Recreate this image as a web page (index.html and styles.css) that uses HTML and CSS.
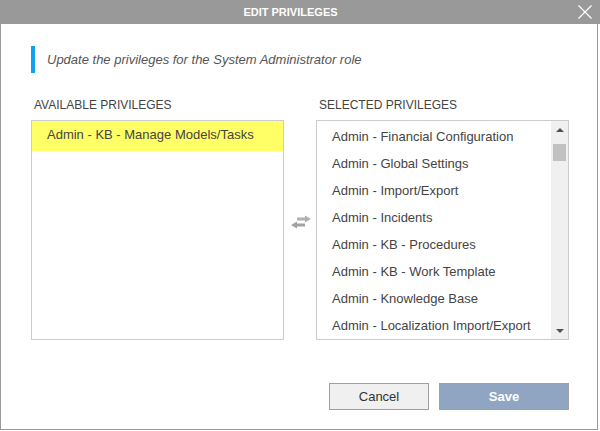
FILE: index.html
```html
<!DOCTYPE html>
<html>
<head>
<meta charset="utf-8">
<link rel="stylesheet" href="styles.css">
</head>
<body>
<div class="dialog">
  <div class="header">
    <div class="title">EDIT PRIVILEGES</div>
    <div class="close">
      <svg width="14" height="14" viewBox="0 0 14 14"><path d="M0.5 0.5 L13.5 13.5 M13.5 0.5 L0.5 13.5" stroke="#fff" stroke-width="1.2" fill="none"/></svg>
    </div>
  </div>
  <div class="body">
    <div class="intro">Update the privileges for the System Administrator role</div>
    <div class="columns">
      <div class="col">
        <div class="label">AVAILABLE PRIVILEGES</div>
        <div class="listbox">
          <div class="avail-item">Admin - KB - Manage Models/Tasks</div>
        </div>
      </div>
      <div class="swap">
        <svg width="22" height="14" viewBox="0 0 22 14">
          <path d="M7 2.5 H15 V0.5 L21 4 L15 7.5 V5.5 H7 Z" fill="#b0b0b0"/>
          <path d="M15 8.5 H7 V6.5 L1 10 L7 13.5 V11.5 H15 Z" fill="#a2a2a2"/>
        </svg>
      </div>
      <div class="col">
        <div class="label">SELECTED PRIVILEGES</div>
        <div class="listbox selected">
          <div class="items">
            <div class="item">Admin - Financial Configuration</div>
            <div class="item">Admin - Global Settings</div>
            <div class="item">Admin - Import/Export</div>
            <div class="item">Admin - Incidents</div>
            <div class="item">Admin - KB - Procedures</div>
            <div class="item">Admin - KB - Work Template</div>
            <div class="item">Admin - Knowledge Base</div>
            <div class="item">Admin - Localization Import/Export</div>
          </div>
          <div class="scrollbar">
            <div class="sb-btn"><span class="tri-up"></span></div>
            <div class="sb-track"><div class="sb-thumb"></div></div>
            <div class="sb-btn"><span class="tri-down"></span></div>
          </div>
        </div>
      </div>
    </div>
    <div class="actions">
      <button class="btn cancel">Cancel</button>
      <button class="btn save">Save</button>
    </div>
  </div>
</div>
</body>
</html>
```
FILE: styles.css
```css
html, body {
  margin: 0;
  padding: 0;
  background: #fff;
}
body {
  font-family: "Liberation Sans", Arial, sans-serif;
  color: #444;
}
.dialog {
  width: 600px;
  height: 431px;
}
.header {
  height: 24px;
  background: #999;
  display: flex;
  align-items: center;
}
.title {
  flex: 1;
  text-align: center;
  padding-left: 3px;
  color: #fff;
  font-weight: bold;
  font-size: 11px;
  line-height: 24px;
}
.close {
  width: 22px;
  height: 24px;
  display: flex;
  align-items: center;
}
.close svg {
  display: block;
}
.body {
  box-sizing: border-box;
  width: 598px;
  height: 406px;
  border: 1px solid #999;
  border-top: none;
  padding: 22px 28px 0 30px;
}
.intro {
  height: 27px;
  line-height: 27px;
  border-left: 4px solid #0ea2ee;
  padding-left: 12px;
  font-style: italic;
  font-size: 13px;
  color: #555;
}
.columns {
  display: grid;
  grid-template-columns: 253px 32px 253px;
  margin-top: 25px;
}
.label {
  font-size: 12px;
  line-height: 14px;
  color: #444;
  margin-bottom: 8px;
  padding-left: 3px;
}
.listbox {
  box-sizing: border-box;
  height: 220px;
  border: 1px solid #ccc;
  background: #fff;
  overflow: hidden;
}
.avail-item {
  background: #ffff66;
  font-size: 13px;
  line-height: 27px;
  padding: 0 0 3px 15px;
  color: #444;
}
.swap {
  display: flex;
  align-items: center;
  justify-content: center;
  padding-top: 5px;
}
.swap svg {
  display: block;
  margin-left: 1px;
}
.selected {
  display: flex;
}
.items {
  flex: 1;
  padding-top: 2px;
  overflow: hidden;
}
.item {
  font-size: 13px;
  line-height: 27px;
  padding-left: 15px;
  white-space: nowrap;
  color: #444;
}
.scrollbar {
  width: 17px;
  background: #f0f0f0;
  display: flex;
  flex-direction: column;
}
.sb-btn {
  height: 17px;
  display: flex;
  align-items: center;
  justify-content: center;
}
.tri-up {
  width: 0;
  height: 0;
  border-left: 4px solid transparent;
  border-right: 4px solid transparent;
  border-bottom: 4px solid #505050;
}
.tri-down {
  width: 0;
  height: 0;
  border-left: 4px solid transparent;
  border-right: 4px solid transparent;
  border-top: 4px solid #505050;
}
.sb-track {
  flex: 1;
}
.sb-thumb {
  margin: 6px 2px 0 2px;
  height: 17px;
  background: #c1c1c1;
}
.actions {
  display: flex;
  justify-content: flex-end;
  gap: 10px;
  margin-top: 43px;
}
.btn {
  box-sizing: border-box;
  height: 27px;
  border: 1px solid #a0a0a0;
  font-family: "Liberation Sans", Arial, sans-serif;
  font-size: 13px;
  padding: 0;
  margin: 0;
}
.cancel {
  width: 100px;
  background: #f0f0f0;
  color: #333;
}
.save {
  width: 130px;
  background: #8fa5c2;
  color: #fff;
  font-weight: bold;
}
```
